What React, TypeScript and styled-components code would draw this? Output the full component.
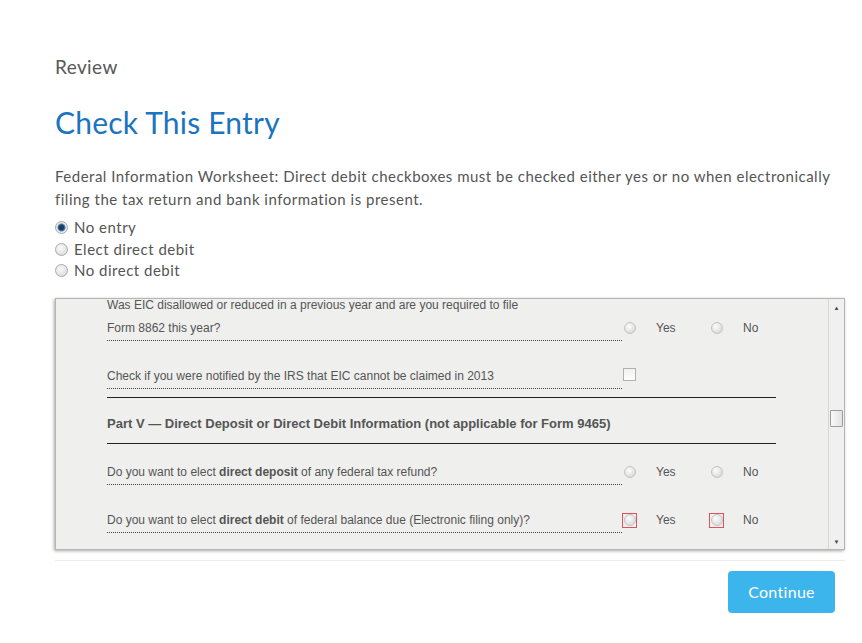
import React from "react";
import styled, { createGlobalStyle } from "styled-components";

const GlobalStyle = createGlobalStyle`
  body {
    margin: 0;
    background: #fff;
    font-family: Lato, "Open Sans", sans-serif;
  }
`;

const App = () => {
  return (
    <>
      <GlobalStyle />
      <Page>
        <Kicker>Review</Kicker>
        <Title>Check This Entry</Title>
        <Message>
          Federal Information Worksheet: Direct debit checkboxes must be checked either yes or no when electronically
          filing the tax return and bank information is present.
        </Message>
        <Choices>
          <Choice>
            <Dot checked /> No entry
          </Choice>
          <Choice>
            <Dot /> Elect direct debit
          </Choice>
          <Choice>
            <Dot /> No direct debit
          </Choice>
        </Choices>

        <FormPanel>
          <FormBody>
            <Question gap={-5}>
              <Label>
                Was EIC disallowed or reduced in a previous year and are you required to file
                <br />
                Form 8862 this year?
              </Label>
              <YesNo />
            </Question>
            <Question gap={24}>
              <Label>Check if you were notified by the IRS that EIC cannot be claimed in 2013</Label>
              <Controls>
                <Box />
              </Controls>
            </Question>
            <PartHeader>Part V — Direct Deposit or Direct Debit Information (not applicable for Form 9465)</PartHeader>
            <Question gap={17}>
              <Label>
                Do you want to elect <b>direct deposit</b> of any federal tax refund?
              </Label>
              <YesNo />
            </Question>
            <Question gap={24}>
              <Label>
                Do you want to elect <b>direct debit</b> of federal balance due (Electronic filing only)?
              </Label>
              <YesNo error />
            </Question>
          </FormBody>
          <ScrollTrack>
            <Arrow>▲</Arrow>
            <Thumb />
            <Arrow>▼</Arrow>
          </ScrollTrack>
        </FormPanel>

        <Footer>
          <ContinueButton>Continue</ContinueButton>
        </Footer>
      </Page>
    </>
  );
};

const YesNo = ({ error }: { error?: boolean }) => (
  <Controls>
    <Option>
      <Ring error={error}>
        <SmallRadio />
      </Ring>
      <OptionText>Yes</OptionText>
    </Option>
    <Option>
      <Ring error={error}>
        <SmallRadio />
      </Ring>
      <OptionText>No</OptionText>
    </Option>
  </Controls>
);

export default App;

const Page = styled.div`
  width: 790px;
  padding: 55px 0 0 55px;
  color: #555;
`;

const Kicker = styled.div`
  font-size: 19px;
  line-height: 24px;
  letter-spacing: 0.4px;
  color: #585858;
`;

const Title = styled.h1`
  margin: 25px 0 0;
  font-size: 30px;
  line-height: 36px;
  font-weight: 400;
  letter-spacing: 0.2px;
  color: #1a74c0;
`;

const Message = styled.p`
  margin: 25px 0 0;
  font-size: 15px;
  line-height: 23px;
  letter-spacing: 0.5px;
  color: #555;
`;

const Choices = styled.div`
  margin-top: 6px;
  display: flex;
  flex-direction: column;
`;

const Choice = styled.label`
  display: flex;
  align-items: center;
  gap: 6px;
  font-size: 15px;
  line-height: 21.5px;
  letter-spacing: 0.5px;
  color: #555;
`;

const Dot = styled.span<{ checked?: boolean }>`
  width: 11px;
  height: 11px;
  border-radius: 50%;
  border: 1px solid #a9a9a9;
  background: ${(p) =>
    p.checked
      ? "radial-gradient(circle, #1d3f63 0 2.5px, #5a86b0 3.5px, #dfe8f0 4.5px, #f4f4f4 6px)"
      : "radial-gradient(circle at 40% 35%, #fafafa 0, #dcdcdc 80%)"};
`;

const FormPanel = styled.div`
  margin-top: 16px;
  height: 250px;
  display: flex;
  border: 1px solid #b5b5b5;
  background: #efefee;
  box-shadow: -1px 1px 3px rgba(0, 0, 0, 0.35);
  overflow: hidden;
  font-family: "Liberation Sans", Arial, sans-serif;
  font-size: 12px;
  color: #555;
`;

const FormBody = styled.div`
  flex: 1;
  padding-left: 51px;
`;

const Question = styled.div<{ gap: number }>`
  margin-top: ${(p) => p.gap}px;
  display: flex;
  align-items: flex-end;
`;

const Label = styled.div`
  width: 515px;
  line-height: 23px;
  border-bottom: 1px dotted #444;

  b {
    font-weight: 700;
    color: #555;
  }
`;

const Controls = styled.div`
  display: flex;
  align-items: center;
  height: 23px;
  margin-bottom: 1px;
`;

const Option = styled.div`
  width: 87px;
  display: flex;
  align-items: center;
`;

const Ring = styled.span<{ error?: boolean }>`
  width: 15px;
  height: 15px;
  display: flex;
  align-items: center;
  justify-content: center;
  box-sizing: border-box;
  border: 1px solid ${(p) => (p.error ? "#e2505c" : "transparent")};
`;

const SmallRadio = styled.span`
  width: 12px;
  height: 12px;
  box-sizing: border-box;
  border-radius: 50%;
  border: 1px solid #c4c4c4;
  background: radial-gradient(circle at 40% 35%, #fdfdfd 0, #d6d6d6 85%);
`;

const OptionText = styled.span`
  margin-left: 19px;
  color: #555;
`;

const Box = styled.span`
  width: 11px;
  height: 11px;
  margin-left: 1px;
  margin-top: -3px;
  border: 1px solid #b0b0b0;
  background: linear-gradient(#f2f2f2, #fdfdfd);
`;

const PartHeader = styled.div`
  width: 669px;
  margin-top: 8px;
  padding: 18px 0 11px;
  border-top: 1px solid #222;
  border-bottom: 1px solid #222;
  font-size: 13px;
  line-height: 16px;
  font-weight: 700;
  color: #555;
`;

const ScrollTrack = styled.div`
  width: 15px;
  border-left: 1px solid #d6d6d6;
  background: #f0f0f0;
  display: flex;
  flex-direction: column;
  align-items: center;
  padding: 4px 0 2px;
`;

const Arrow = styled.span`
  font-size: 6px;
  line-height: 10px;
  color: #444;
`;

const Thumb = styled.span`
  width: 13px;
  height: 17px;
  margin: 97px 0 auto;
  border: 1px solid #9c9c9c;
  border-radius: 1px;
  background: linear-gradient(90deg, #fafafa, #e2e2e2);
  box-sizing: border-box;
`;

const Footer = styled.div`
  margin-top: 10px;
  border-top: 1px solid #ececec;
  padding: 10px 10px 0 0;
  display: flex;
  justify-content: flex-end;
`;

const ContinueButton = styled.button`
  width: 107px;
  height: 42px;
  border: none;
  border-radius: 4px;
  background: #3cb4ec;
  color: #fff;
  font-family: Lato, "Open Sans", sans-serif;
  font-size: 16px;
  letter-spacing: 0.3px;
`;
